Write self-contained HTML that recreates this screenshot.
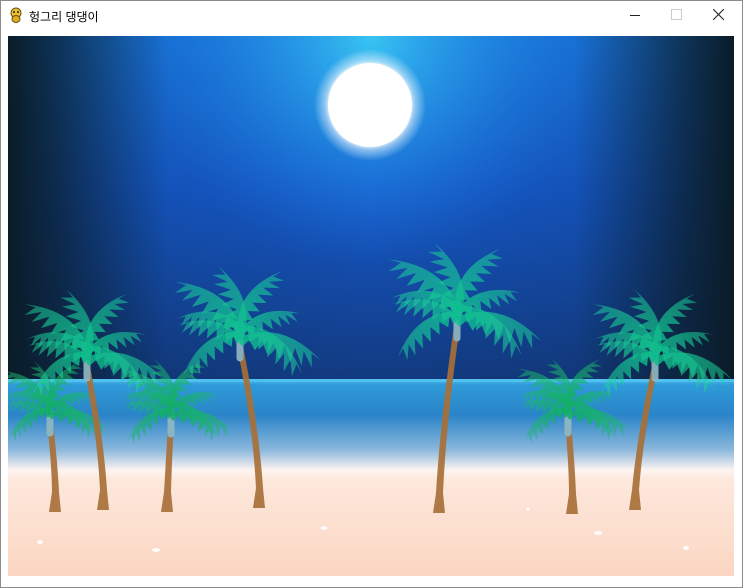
<!DOCTYPE html>
<html><head><meta charset="utf-8"><style>
body{margin:0;width:743px;height:588px;background:#fff;position:relative;overflow:hidden;font-family:"Liberation Sans","Noto Sans CJK KR",sans-serif}
.win{position:absolute;left:0;top:0;width:741px;height:586px;border:1px solid #8a8a8a;background:#fff}
.title{position:absolute;left:29px;top:8px;font-size:12px;color:#000}
svg{position:absolute;left:8px;top:36px}
</style></head><body>
<div class="win"></div>
<svg style="left:9px;top:7px" width="14" height="16" viewBox="0 0 14 16"><ellipse cx="7" cy="6" rx="5" ry="5" fill="#e8c030" stroke="#705010"/><ellipse cx="7" cy="12" rx="4" ry="3.5" fill="#d8b020" stroke="#705010"/><circle cx="5" cy="5" r="1" fill="#222"/><circle cx="9" cy="5" r="1" fill="#222"/></svg>
<div class="title">헝그리 댕댕이</div>
<div style="position:absolute;left:630px;top:15px;width:10px;height:1px;background:#222"></div>
<div style="position:absolute;left:671px;top:9px;width:9px;height:9px;border:1px solid #ccc"></div>
<svg style="left:713px;top:9px" width="11" height="11"><path d="M0,0 L11,11 M11,0 L0,11" stroke="#222" stroke-width="1.1"/></svg>
<svg width="726" height="540" viewBox="0 0 726 540">
<defs>
<linearGradient id="skyv" x1="0" y1="0" x2="0" y2="1"><stop offset="0" stop-color="#1a7ae8"/><stop offset="0.45" stop-color="#1558c8"/><stop offset="1" stop-color="#123a80"/></linearGradient>
<linearGradient id="skyh" x1="0" y1="0" x2="1" y2="0"><stop offset="0" stop-color="#0a1c28"/><stop offset="0.07" stop-color="#0a1c28" stop-opacity="0.75"/><stop offset="0.22" stop-color="#0a1c28" stop-opacity="0.1"/><stop offset="0.5" stop-color="#0a1c28" stop-opacity="0"/><stop offset="0.78" stop-color="#0a1c28" stop-opacity="0.1"/><stop offset="0.93" stop-color="#0a1c28" stop-opacity="0.75"/><stop offset="1" stop-color="#0a1c28"/></linearGradient>
<radialGradient id="cy" cx="362" cy="0" r="230" gradientUnits="userSpaceOnUse"><stop offset="0" stop-color="#38c4f2"/><stop offset="0.5" stop-color="#28a0ee" stop-opacity="0.5"/><stop offset="1" stop-color="#1a7ae8" stop-opacity="0"/></radialGradient>
<linearGradient id="sea" x1="0" y1="0" x2="0" y2="1"><stop offset="0" stop-color="#4ab8ea"/><stop offset="0.05" stop-color="#2e9ad8"/><stop offset="0.35" stop-color="#2a84c8"/><stop offset="0.7" stop-color="#8cb8dc"/><stop offset="0.9" stop-color="#fdf4f0"/><stop offset="1" stop-color="#fde8dc"/></linearGradient>
<linearGradient id="sand" x1="0" y1="0" x2="0" y2="1"><stop offset="0" stop-color="#fde8dc"/><stop offset="1" stop-color="#fbd6c2"/></linearGradient>
<radialGradient id="glow"><stop offset="0.7" stop-color="#fff"/><stop offset="0.8" stop-color="#fff" stop-opacity="0.5"/><stop offset="1" stop-color="#fff" stop-opacity="0"/></radialGradient>
<linearGradient id="lf" x1="0" y1="0" x2="1" y2="0"><stop offset="0" stop-color="#10c890"/><stop offset="1" stop-color="#20d8a0" stop-opacity="0.6"/></linearGradient>
<linearGradient id="lf2" x1="0" y1="0" x2="1" y2="0"><stop offset="0" stop-color="#10b060"/><stop offset="1" stop-color="#20b870" stop-opacity="0.6"/></linearGradient>
<path id="leaf" d="M0,-3 Q35,-22 72,8 L63,3 L65,15 L56,2 L56,15 L48,0 L46,13 L39,-1 L36,11 L29,-2 L25,9 L19,-2 L14,7 L8,-1 L3,5 L0,3 Z"/>
</defs>
<rect width="726" height="345" fill="url(#skyv)"/>
<rect width="726" height="345" fill="url(#cy)"/>
<rect width="726" height="345" fill="url(#skyh)"/>
<rect y="344" width="726" height="100" fill="url(#sea)"/>
<rect y="343" width="726" height="3" fill="#50c0ee"/>
<rect y="443" width="726" height="97" fill="url(#sand)"/>
<circle cx="362" cy="69" r="56" fill="url(#glow)"/>
<circle cx="362" cy="69" r="42" fill="#fff"/>
<g fill="#fff" opacity="0.9"><ellipse cx="32" cy="506" rx="3" ry="2"/><ellipse cx="148" cy="514" rx="4" ry="2"/><ellipse cx="316" cy="492" rx="3" ry="2"/><ellipse cx="520" cy="473" rx="2" ry="1.5"/><ellipse cx="590" cy="497" rx="4" ry="2"/><ellipse cx="678" cy="512" rx="3" ry="2"/></g>
<g id="palms" opacity="0.92"></g>
</svg>
<script>
var P=[
 [42,385,48,476,0.8,'lf2'],[163,386,160,476,0.85,'lf2'],[560,385,565,478,0.85,'lf2'],
 [79,330,96,474,1.05,'lf'],[232,310,252,472,1.1,'lf'],[449,290,432,477,1.15,'lf'],[647,330,628,474,1.05,'lf']];
var A=[-165,-135,-100,-60,-25,8,30,150,200];
var h='';
P.forEach(function(p){
 var tx=p[0],ty=p[1],bx=p[2],by=p[3],s=p[4];
 var mx=(tx+bx)/2+(bx-tx)*0.3;
 h+='<path d="M'+(tx-3)+','+ty+' Q'+(mx-3)+','+((ty+by)/2)+' '+(bx-4)+','+(by-20)+' L'+(bx-7)+','+by+' L'+(bx+5)+','+by+' L'+(bx+3)+','+(by-20)+' Q'+(mx+3)+','+((ty+by)/2)+' '+(tx+3)+','+ty+' Z" fill="#a87038"/>';
 h+='<path d="M'+tx+','+(ty-20)+' L'+tx+','+(ty+12)+'" stroke="#90b8c0" stroke-width="7" stroke-linecap="round"/>';
 A.forEach(function(a,i){
  var sc=s*(0.8+0.25*((i*7)%4)/3);
  h+='<use href="#leaf" fill="url(#'+p[5]+')" opacity="0.85" transform="translate('+tx+','+(ty-18+(i%3)*6)+') rotate('+a+') scale('+sc+','+(a>90||a<-90?-sc:sc)+')"/>';
 });
});
document.getElementById('palms').innerHTML=h;
</script>
</body></html>
